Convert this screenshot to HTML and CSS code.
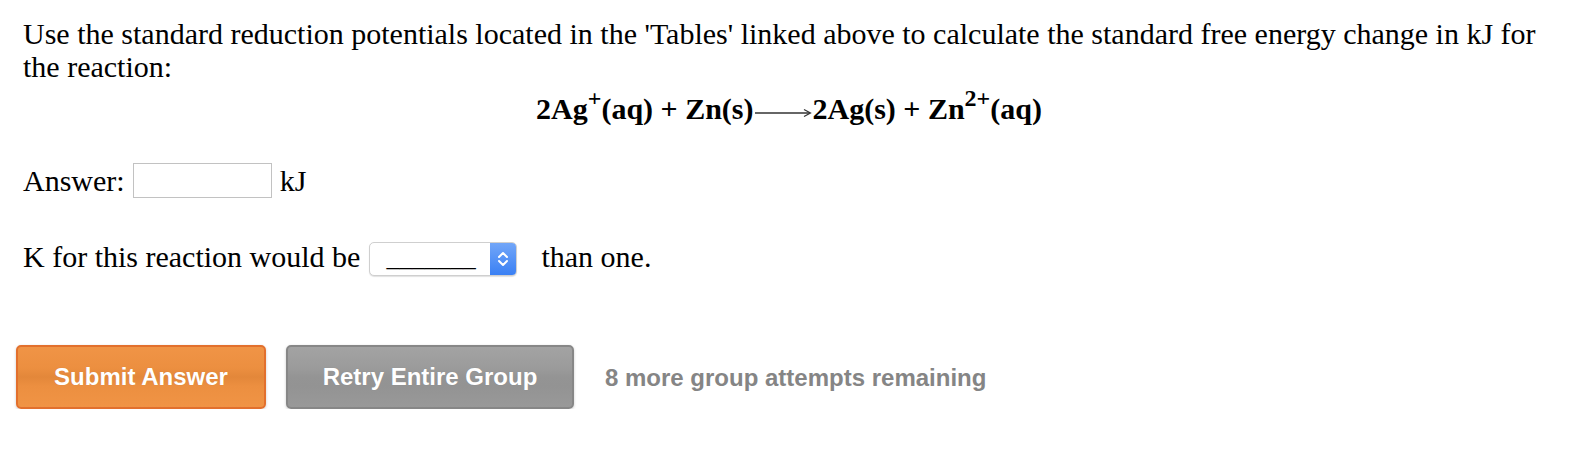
FILE: index.html
```html
<!DOCTYPE html>
<html lang="en">
<head>
<meta charset="utf-8">
<title>Question</title>
<link rel="stylesheet" href="styles.css">
</head>
<body>
<div class="question">
  <p class="prompt">Use the standard reduction potentials located in the 'Tables' linked above to calculate the standard free energy change in kJ for the reaction:</p>
  <p class="equation">2Ag<sup>+</sup>(aq) + Zn(s)<svg class="arrow" width="57" height="12" viewBox="0 0 57 12"><line x1="0" y1="6" x2="55" y2="6" stroke="#333" stroke-width="1.4"/><path d="M49 2.5 L55.5 6 L49 9.5" fill="none" stroke="#333" stroke-width="1.2"/></svg>2Ag(s) + Zn<sup>2+</sup>(aq)</p>
  <div class="answer-row">
    <span>Answer:</span>
    <span class="input-box"></span>
    <span>kJ</span>
  </div>
  <div class="k-row">
    <span>K for this reaction would be</span>
    <span class="select-box">
      <span class="select-value">_______</span>
      <span class="select-arrow"><svg width="12" height="20" viewBox="0 0 12 20"><path d="M2 8 L6 4 L10 8" fill="none" stroke="#fff" stroke-width="2" stroke-linecap="round" stroke-linejoin="round"/><path d="M2 12 L6 16 L10 12" fill="none" stroke="#fff" stroke-width="2" stroke-linecap="round" stroke-linejoin="round"/></svg></span>
    </span>
    <span class="than">than one.</span>
  </div>
  <div class="actions">
    <button class="btn btn-submit">Submit Answer</button>
    <button class="btn btn-retry">Retry Entire Group</button>
    <span class="remaining">8 more group attempts remaining</span>
  </div>
</div>
</body>
</html>
```
FILE: styles.css
```css
html, body {
  margin: 0;
  padding: 0;
  background: #fff;
}
body {
  font-family: "Liberation Serif", "Times New Roman", serif;
  font-size: 30px;
  line-height: 33px;
  color: #000;
}
.question {
  padding: 17px 23px 0 23px;
}
.prompt {
  margin: 0;
}
.equation {
  margin: 9px 0 0 0;
  text-align: center;
  font-weight: bold;
}
.equation sup {
  font-size: 24px;
  line-height: 0;
  vertical-align: 13px;
}
.arrow {
  display: inline-block;
  vertical-align: 0;
  margin: 0 1px;
}
.answer-row {
  display: flex;
  align-items: center;
  height: 35px;
  margin-top: 38px;
}
.input-box {
  display: inline-block;
  width: 137px;
  height: 33px;
  border: 1px solid #c2c2c2;
  margin: 0 8px 0 8px;
  background: #fff;
}
.k-row {
  display: flex;
  align-items: flex-start;
  height: 36px;
  margin-top: 42px;
}
.select-box {
  display: inline-flex;
  align-items: stretch;
  width: 146px;
  height: 32px;
  margin: 2px 0 0 9px;
  border: 1px solid #cfcfcf;
  border-radius: 5px;
  box-shadow: 0 1px 1px rgba(0,0,0,0.12);
  overflow: hidden;
  background: #fff;
}
.select-value {
  flex: 1;
  padding-left: 16px;
  line-height: 29px;
  font-size: 25.5px;
}
.select-arrow {
  width: 26px;
  display: flex;
  align-items: center;
  justify-content: center;
  background: linear-gradient(#72a6f8, #3a80f4);
}
.than {
  margin-left: 24px;
}
.actions {
  display: flex;
  align-items: center;
  margin-top: 69px;
  margin-left: -7px;
}
.btn {
  font-family: "Liberation Sans", Arial, Helvetica, sans-serif;
  font-weight: bold;
  font-size: 24px;
  color: #fff;
  height: 64px;
  border-radius: 5px;
  padding: 0;
  cursor: pointer;
  box-sizing: border-box;
  box-shadow: 0 1px 3px rgba(0,0,0,0.2);
  text-shadow: 0 0 1px rgba(0,0,0,0.1);
}
.btn-submit {
  width: 250px;
  border: 2px solid #e2702d;
  background: linear-gradient(#f09446 0%, #ec8f40 35%, #e3873a 50%, #ec8f40 65%, #f09445 100%);
}
.btn-retry {
  width: 288px;
  margin-left: 20px;
  border: 2px solid #878787;
  background: linear-gradient(#a3a3a3 0%, #9b9b9b 35%, #949494 50%, #939393 65%, #999 100%);
}
.remaining {
  margin-left: 31px;
  font-family: "Liberation Sans", Arial, Helvetica, sans-serif;
  font-weight: bold;
  font-size: 24px;
  color: #858585;
}
```
